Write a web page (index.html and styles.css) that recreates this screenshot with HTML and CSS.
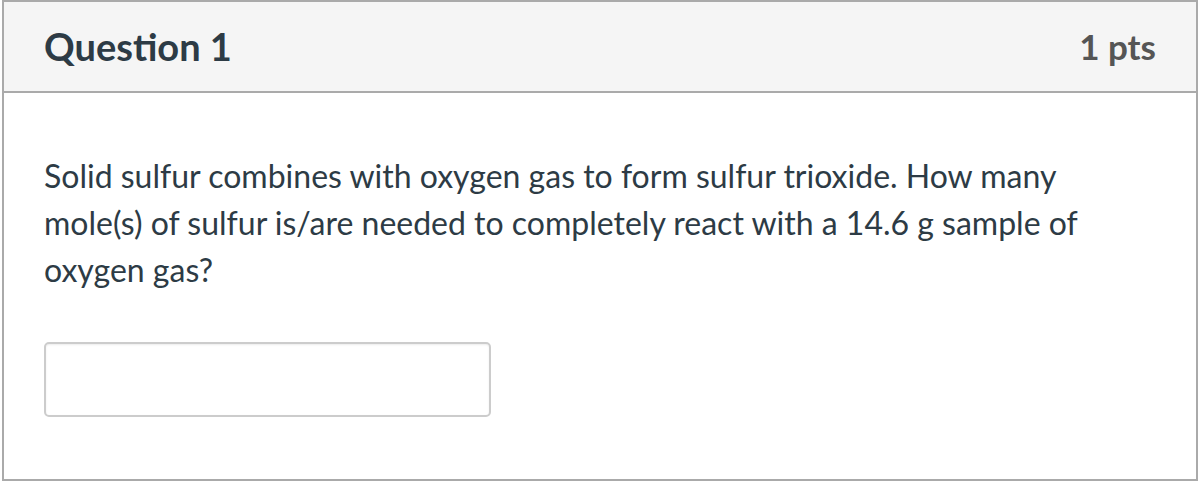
FILE: index.html
```html
<!DOCTYPE html>
<html>
<head>
<meta charset="utf-8">
<link rel="stylesheet" href="styles.css">
</head>
<body>
<div class="question">
  <div class="q-header">
    <h2 class="q-title">Question 1</h2>
    <span class="q-points">1 pts</span>
  </div>
  <div class="q-body">
    <p class="q-text">Solid sulfur combines with oxygen gas to form sulfur trioxide. How many mole(s) of sulfur is/are needed to completely react with a 14.6 g sample of oxygen gas?</p>
    <input class="q-input" type="text">
  </div>
</div>
</body>
</html>
```
FILE: styles.css
```css
html, body {
  margin: 0;
  padding: 0;
  background: #fff;
}
body {
  font-family: Lato, "Open Sans", sans-serif;
}
.question {
  margin: 0 2px;
  width: 1192px;
  height: 477px;
  border: 2px solid #aaaaaa;
  background: #fff;
}
.q-header {
  display: flex;
  justify-content: space-between;
  align-items: center;
  height: 87px;
  padding: 0 40px 2px 40px;
  background: #f5f5f5;
  border-bottom: 2px solid #aaaaaa;
}
.q-title {
  margin: 0;
  font-size: 38px;
  font-weight: 700;
  color: #2d3b45;
}
.q-points {
  font-size: 35px;
  font-weight: 700;
  color: #555555;
}
.q-body {
  padding: 59px 40px 0 40px;
}
.q-text {
  margin: 0;
  font-size: 32px;
  line-height: 47px;
  color: #2d3b45;
  max-width: 1100px;
}
.q-input {
  display: block;
  box-sizing: border-box;
  margin-top: 49px;
  width: 447px;
  height: 75px;
  border: 2px solid #cccccc;
  border-radius: 5px;
  background: #fff;
  box-shadow: inset 0 1px 2px rgba(0,0,0,0.08);
  outline: none;
}
```
